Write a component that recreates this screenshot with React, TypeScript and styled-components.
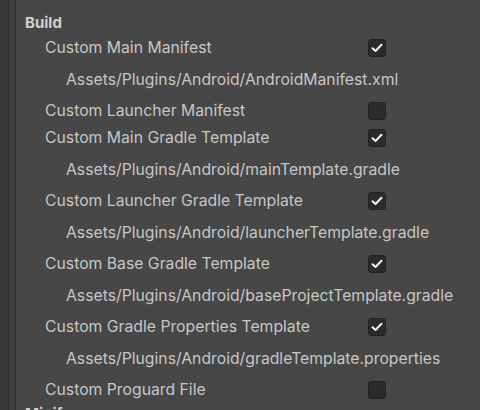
import React from 'react'
import styled, { createGlobalStyle } from 'styled-components'

const GlobalStyle = createGlobalStyle`
  html, body {
    margin: 0;
    padding: 0;
    background: #474747;
  }
  body {
    font-family: Inter, "Noto Sans", sans-serif;
  }
`

const StyledPage = styled.div`
  display: flex;
  width: 480px;
  height: 410px;
  overflow: hidden;
  background: #474747;
`

const StyledOuterGutter = styled.div`
  width: 8px;
  flex-shrink: 0;
  background: #393939;
  border-right: 1px solid #2b2b2b;
`

const StyledInnerGutter = styled.div`
  width: 6px;
  flex-shrink: 0;
  background: #3f3f3f;
  border-right: 1px solid #2d2d2d;
`

const StyledContent = styled.div`
  flex: 1;
  display: flex;
  flex-direction: column;
  padding: 12px 0 0 9px;
  color: #c6c6c6;
  font-size: 15.75px;
`

const StyledHeader = styled.div`
  height: 22px;
  line-height: 22px;
  font-weight: 700;
  font-size: 15px;
  color: #d0d0d0;
  flex-shrink: 0;
`

const StyledRow = styled.div<{ $path?: boolean }>`
  display: flex;
  align-items: center;
  flex-shrink: 0;
  height: ${p => (p.$path ? '36px' : '27px')};
  padding-left: ${p => (p.$path ? '41px' : '20px')};
  white-space: nowrap;
`

const StyledLabel = styled.div`
  width: 323px;
  flex-shrink: 0;
`

const StyledCheckbox = styled.div`
  width: 18px;
  height: 18px;
  box-sizing: border-box;
  border-radius: 3px;
  background: #2b2b2b;
  border: 1px solid #222222;
  display: flex;
  align-items: center;
  justify-content: center;
`

interface SettingItem {
    id: number,
    label: string,
    checked: boolean,
    path?: string
}

const Items: SettingItem[] = [
    { id: 1, label: 'Custom Main Manifest', checked: true, path: 'Assets/Plugins/Android/AndroidManifest.xml' },
    { id: 2, label: 'Custom Launcher Manifest', checked: false },
    { id: 3, label: 'Custom Main Gradle Template', checked: true, path: 'Assets/Plugins/Android/mainTemplate.gradle' },
    { id: 4, label: 'Custom Launcher Gradle Template', checked: true, path: 'Assets/Plugins/Android/launcherTemplate.gradle' },
    { id: 5, label: 'Custom Base Gradle Template', checked: true, path: 'Assets/Plugins/Android/baseProjectTemplate.gradle' },
    { id: 6, label: 'Custom Gradle Properties Template', checked: true, path: 'Assets/Plugins/Android/gradleTemplate.properties' },
    { id: 7, label: 'Custom Proguard File', checked: false },
]

const Checkbox = ({ checked }: { checked: boolean }) => (
    <StyledCheckbox>
        {checked && (
            <svg width="12" height="10" viewBox="0 0 12 10">
                <polyline points="1.5,5.2 4.5,8 10.5,1.8" fill="none" stroke="#f2f2f2" strokeWidth="2" strokeLinecap="round" strokeLinejoin="round" />
            </svg>
        )}
    </StyledCheckbox>
)

const App = () => (
    <>
        <GlobalStyle />
        <StyledPage>
            <StyledOuterGutter />
            <StyledInnerGutter />
            <StyledContent>
                <StyledHeader>Build</StyledHeader>
                {Items.map(item => (
                    <React.Fragment key={item.id}>
                        <StyledRow>
                            <StyledLabel>{item.label}</StyledLabel>
                            <Checkbox checked={item.checked} />
                        </StyledRow>
                        {item.path && (
                            <StyledRow $path>{item.path}</StyledRow>
                        )}
                    </React.Fragment>
                ))}
                <StyledHeader>Minify</StyledHeader>
            </StyledContent>
        </StyledPage>
    </>
)

export default App
